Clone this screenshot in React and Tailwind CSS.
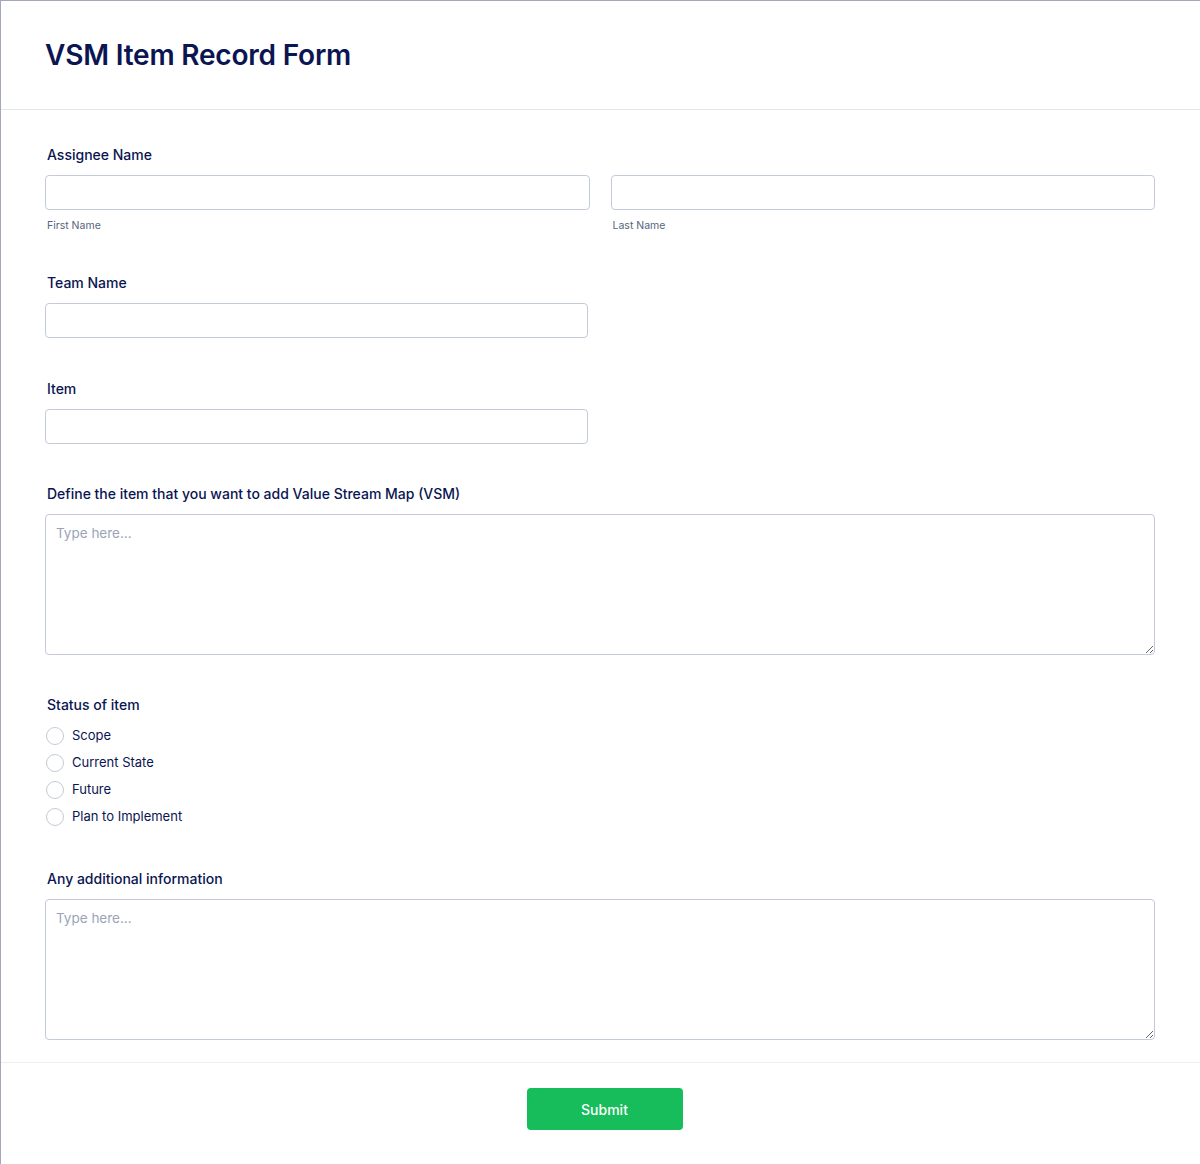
import React from "react";

const Label = ({ children, className = "" }) => (
  <div className={`text-[14px] leading-5 font-medium text-[#0a1551] pl-[2px] ${className}`}>
    {children}
  </div>
);

const Input = ({ className = "" }) => (
  <input
    type="text"
    className={`h-[35px] rounded-[4px] border border-[#c3cad8] bg-white px-2.5 text-sm outline-none ${className}`}
  />
);

const TextArea = () => (
  <textarea
    placeholder="Type here..."
    className="mt-[10px] block w-full h-[141px] rounded-[4px] border border-[#c3cad8] bg-white px-2.5 py-[8px] text-[13.5px] leading-5 text-[#0a1551] placeholder:text-[#9ba3b9] outline-none"
  />
);

const statuses = ["Scope", "Current State", "Future", "Plan to Implement"];

export default function App() {
  return (
    <div
      className="w-[1200px] min-h-[1164px] bg-white border-t border-l border-[#a3a6c2]"
      style={{ fontFamily: "Inter, 'Noto Sans', sans-serif" }}
    >
      {/* header */}
      <div className="h-[109px] flex items-center pl-[44px] pr-[45px] border-b border-[#e4e6ee]">
        <h1 className="text-[28px] leading-[34px] font-semibold text-[#0a1551] tracking-[-0.2px]">
          VSM Item Record Form
        </h1>
      </div>

      {/* body */}
      <div className="pl-[44px] pr-[45px] pt-[35px] pb-[22px] border-b border-[#eceef3]">
        <Label>Assignee Name</Label>
        <div className="mt-[10px] flex gap-[21px]">
          <div className="flex-1">
            <Input className="w-full" />
            <div className="mt-[9px] pl-[2px] text-[10.5px] leading-[14px] text-[#57647e]">First Name</div>
          </div>
          <div className="flex-1">
            <Input className="w-full" />
            <div className="mt-[9px] pl-[2px] text-[10.5px] leading-[14px] text-[#57647e]">Last Name</div>
          </div>
        </div>

        <Label className="mt-[40px]">Team Name</Label>
        <Input className="mt-[10px] block w-[543px]" />

        <Label className="mt-[41px]">Item</Label>
        <Input className="mt-[10px] block w-[543px]" />

        <Label className="mt-[40px]">Define the item that you want to add Value Stream Map (VSM)</Label>
        <TextArea />

        <Label className="mt-[40px]">Status of item</Label>
        <div className="mt-[7px] flex flex-col">
          {statuses.map((s) => (
            <label key={s} className="h-[27px] flex items-center gap-[8px] pl-[1px]">
              <span className="w-[18px] h-[18px] rounded-full border border-[#c3cad8] bg-white" />
              <span className="text-[13px] text-[#0a1551]">{s}</span>
            </label>
          ))}
        </div>

        <Label className="mt-[39px]">Any additional information</Label>
        <TextArea />
      </div>

      {/* footer */}
      <div className="flex justify-center pt-[25px] pl-[8px]">
        <button className="w-[156px] h-[42px] rounded-[4px] bg-[#18bd5b] text-white text-[14px] font-medium">
          Submit
        </button>
      </div>
    </div>
  );
}
